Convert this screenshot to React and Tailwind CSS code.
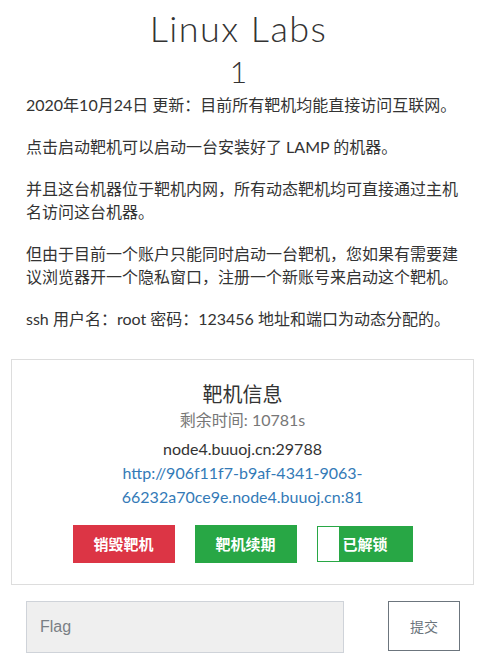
import React from "react";

const notes = [
  ["2020年10月24日 更新：目前所有靶机均能直接访问互联网。"],
  ["点击启动靶机可以启动一台安装好了 LAMP 的机器。"],
  ["并且这台机器位于靶机内网，所有动态靶机均可直接通过主机名访问这台机器。"],
  ["但由于目前一个账户只能同时启动一台靶机，您如果有需要建议浏览器开一个隐私窗口，注册一个新账号来启动这个靶机。"],
  ["ssh 用户名：root 密码：123456 地址和端口为动态分配的。"],
];

export default function App() {
  return (
    <div
      className="w-[477px] min-h-[668px] bg-white text-[#333]"
      style={{ fontFamily: 'Lato, "Noto Sans CJK SC", sans-serif' }}
    >
      <h1 className="pt-[8px] text-center text-[36px] leading-[40px] font-light tracking-[0.04em] text-[#333]">
        Linux Labs
      </h1>
      <div className="mt-[5px] text-center text-[30px] leading-[36px] font-light">1</div>

      <div className="mt-[4px] ml-[26px] w-[440px] text-[16px] leading-[23px]">
        {notes.map((n, i) => (
          <p key={i} className="mb-[19px]">
            {n[0]}
          </p>
        ))}
      </div>

      <div className="mt-[29px] ml-[11px] w-[463px] border border-[#ddd] pt-[20px] pb-[21px] text-center">
        <div className="text-[20px] leading-[28px]">靶机信息</div>
        <div className="text-[16px] leading-[24px] text-[#777]">剩余时间: 10781s</div>
        <div className="mt-[5px] text-[16px] leading-[24px]">node4.buuoj.cn:29788</div>
        <a className="block text-[16px] leading-[24px] text-[#337ab7]" href="#">
          http://906f11f7-b9af-4341-9063-
          <br />
          66232a70ce9e.node4.buuoj.cn:81
        </a>
        <div className="mt-[16px] flex items-center justify-center gap-5">
          <button className="h-[38px] w-[102px] bg-[#dc3545] text-[15px] font-bold text-white">
            销毁靶机
          </button>
          <button className="h-[38px] w-[102px] bg-[#28a745] text-[15px] font-bold text-white">
            靶机续期
          </button>
          <button className="flex h-[36px] w-[96px] items-center border border-[#28a745] bg-[#28a745] text-[15px] font-bold text-white">
            <span className="h-full w-[21px] bg-white" />
            <span className="pl-[4px]">已解锁</span>
          </button>
        </div>
      </div>

      <div className="mt-[16px] flex items-start">
        <input
          className="ml-[26px] h-[52px] w-[318px] border border-[#cfd3d9] bg-[#efefef] px-[13px] text-[16px] placeholder-[#7a7f85] outline-none"
          style={{ fontFamily: '"Liberation Sans", "Noto Sans CJK SC", sans-serif' }}
          placeholder="Flag"
        />
        <button className="ml-[44px] h-[50px] w-[72px] border border-[#6c757d] bg-white text-[14px] text-[#6c757d]">
          提交
        </button>
      </div>
    </div>
  );
}
